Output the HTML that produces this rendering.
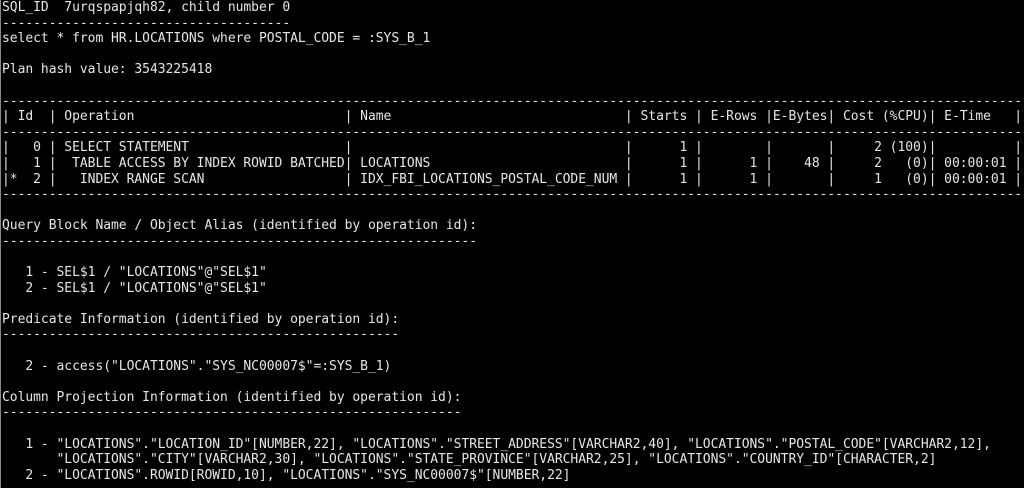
<!DOCTYPE html>
<html><head><meta charset="utf-8"><style>
html,body{margin:0;padding:0;background:#000;width:1024px;height:488px;overflow:hidden}
body{border-left:1px solid #8a8a8a;box-sizing:border-box}
pre{margin:0;position:absolute;left:2px;top:0px;font-family:"DejaVu Sans Mono","Liberation Mono",monospace;font-size:13px;letter-spacing:-0.04px;line-height:15.6px;color:#e6e6e6;white-space:pre}
</style></head><body><pre>SQL_ID  7urqspapjqh82, child number 0
-------------------------------------
select * from HR.LOCATIONS where POSTAL_CODE = :SYS_B_1

Plan hash value: 3543225418

-----------------------------------------------------------------------------------------------------------------------------------
| Id  | Operation                           | Name                              | Starts | E-Rows |E-Bytes| Cost (%CPU)| E-Time   |
-----------------------------------------------------------------------------------------------------------------------------------
|   0 | SELECT STATEMENT                    |                                   |      1 |        |       |     2 (100)|          |
|   1 |  TABLE ACCESS BY INDEX ROWID BATCHED| LOCATIONS                         |      1 |      1 |    48 |     2   (0)| 00:00:01 |
|*  2 |   INDEX RANGE SCAN                  | IDX_FBI_LOCATIONS_POSTAL_CODE_NUM |      1 |      1 |       |     1   (0)| 00:00:01 |
-----------------------------------------------------------------------------------------------------------------------------------

Query Block Name / Object Alias (identified by operation id):
-------------------------------------------------------------

   1 - SEL$1 / "LOCATIONS"@"SEL$1"
   2 - SEL$1 / "LOCATIONS"@"SEL$1"

Predicate Information (identified by operation id):
---------------------------------------------------

   2 - access("LOCATIONS"."SYS_NC00007$"=:SYS_B_1)

Column Projection Information (identified by operation id):
-----------------------------------------------------------

   1 - "LOCATIONS"."LOCATION_ID"[NUMBER,22], "LOCATIONS"."STREET_ADDRESS"[VARCHAR2,40], "LOCATIONS"."POSTAL_CODE"[VARCHAR2,12],
       "LOCATIONS"."CITY"[VARCHAR2,30], "LOCATIONS"."STATE_PROVINCE"[VARCHAR2,25], "LOCATIONS"."COUNTRY_ID"[CHARACTER,2]
   2 - "LOCATIONS".ROWID[ROWID,10], "LOCATIONS"."SYS_NC00007$"[NUMBER,22]</pre></body></html>
